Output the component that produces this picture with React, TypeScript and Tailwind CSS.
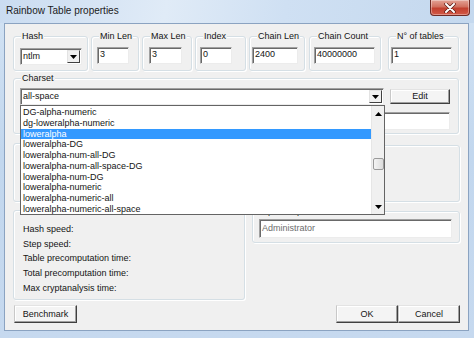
import React from "react";

const FONT = "font-['Liberation_Sans',Arial,sans-serif]";

const charsets = [
  "DG-alpha-numeric",
  "dg-loweralpha-numeric",
  "loweralpha",
  "loweralpha-DG",
  "loweralpha-num-all-DG",
  "loweralpha-num-all-space-DG",
  "loweralpha-num-DG",
  "loweralpha-numeric",
  "loweralpha-numeric-all",
  "loweralpha-numeric-all-space",
];

function Group({ label, className, children }: { label?: string; className?: string; children?: React.ReactNode }) {
  return (
    <div className={`relative shrink-0 rounded-[3px] border border-[#d5dfe5] shadow-[inset_1px_1px_0_#fff,1px_1px_0_#fff] ${className ?? ""}`}>
      {label && (
        <span className="absolute -top-[7px] left-[7px] bg-[#f0f0f0] px-[1px] leading-[12px] whitespace-nowrap">{label}</span>
      )}
      {children}
    </div>
  );
}

function Field({ value, className, muted }: { value?: string; className?: string; muted?: boolean }) {
  return (
    <div
      className={`bg-white border border-t-[#a0a0a0] border-l-[#a0a0a0] border-r-[#ececec] border-b-[#ececec] shadow-[inset_1px_1px_0_#696969] pl-[2px] pt-[1px] leading-[11px] whitespace-nowrap overflow-hidden ${muted ? "text-[#6d6d6d]" : ""} ${className ?? ""}`}
    >
      {value}
    </div>
  );
}

function Arrow({ up }: { up?: boolean }) {
  return (
    <svg width="7" height="4" viewBox="0 0 7 4" className={up ? "rotate-180" : ""}>
      <path d="M0 0h7L3.5 4z" fill="#000" />
    </svg>
  );
}

function Combo({ value, className }: { value: string; className?: string }) {
  return (
    <div
      className={`flex bg-white border border-t-[#a0a0a0] border-l-[#a0a0a0] border-r-[#ececec] border-b-[#ececec] shadow-[inset_1px_1px_0_#696969] ${className ?? ""}`}
    >
      <span className="flex-1 pl-[2px] pt-[2px] leading-[11px]">{value}</span>
      <div className="w-[13px] my-[1px] mr-[1px] flex items-center justify-center bg-[#f0f0f0] border border-t-[#e3e3e3] border-l-[#e3e3e3] border-r-[#404040] border-b-[#404040]">
        <Arrow />
      </div>
    </div>
  );
}

function Button({ label, className }: { label: string; className?: string }) {
  return (
    <div
      className={`shrink-0 flex items-center justify-center bg-[#f4f4f4] border border-t-[#e3e3e3] border-l-[#c8c8c8] border-r-[#404040] border-b-[#404040] shadow-[inset_-1px_-1px_0_#a0a0a0,inset_1px_1px_0_#fff] leading-[11px] ${className ?? ""}`}
    >
      {label}
    </div>
  );
}

export default function App() {
  return (
    <div
      className={`w-[474px] h-[338px] overflow-hidden ${FONT} text-[9px] text-[#141414] flex flex-col bg-[linear-gradient(180deg,#d3e3f4_0%,#c2d7ee_45%,#c6d9ef_100%)]`}
    >
      <div className="h-[23px] shrink-0 flex items-start bg-[linear-gradient(100deg,#cadcf1_0%,#e0ebf7_35%,#cfe0f3_60%,#c4d8ee_100%)]">
        <span className="ml-[6px] mt-[5px] text-[10px] leading-[12px] text-[#1b1b1b]">Rainbow Table properties</span>
        <div className="ml-auto mr-[4px] w-[40px] h-[16px] rounded-b-[4px] border border-t-0 border-[#6e2a24] bg-[linear-gradient(180deg,#e3a396_0%,#d1705f_45%,#c2402f_55%,#d35a48_100%)] flex items-center justify-center shadow-[inset_0_0_0_1px_rgba(255,255,255,0.35)]">
          <svg width="12" height="10" viewBox="0 0 12 10">
            <path d="M2 1l8 8M10 1L2 9" stroke="#5a1a14" strokeWidth="3.4" strokeLinecap="round" />
            <path d="M2 1l8 8M10 1L2 9" stroke="#fff" strokeWidth="2" strokeLinecap="round" />
          </svg>
        </div>
      </div>

      <div className="ml-[4px] w-[465px] h-[308px] shrink-0 border border-[#8ba3c1] bg-[#f0f0f0] relative">
        {/* top parameters */}
        <div className="flex mt-[12px] ml-[8px]">
          <Group label="Hash" className="w-[75px] h-[35px]">
            <Combo value="ntlm" className="ml-[6px] mt-[11px] w-[62px] h-[17px]" />
          </Group>
          <Group label="Min Len" className="ml-[3px] w-[48px] h-[35px]">
            <Field value="3" className="ml-[5px] mt-[10px] w-[32px] h-[17px]" />
          </Group>
          <Group label="Max Len" className="ml-[3px] w-[50px] h-[35px]">
            <Field value="3" className="ml-[6px] mt-[10px] w-[33px] h-[17px]" />
          </Group>
          <Group label="Index" className="ml-[3px] w-[51px] h-[35px]">
            <Field value="0" className="ml-[4px] mt-[10px] w-[32px] h-[17px]" />
          </Group>
          <Group label="Chain Len" className="ml-[3px] w-[56px] h-[35px]">
            <Field value="2400" className="ml-[2px] mt-[10px] w-[46px] h-[17px]" />
          </Group>
          <Group label="Chain Count" className="ml-[4px] w-[72px] h-[35px]">
            <Field value="40000000" className="ml-[4px] mt-[10px] w-[61px] h-[17px]" />
          </Group>
          <Group label="N° of tables" className="ml-[7px] w-[71px] h-[35px]">
            <Field value="1" className="ml-[2px] mt-[10px] w-[61px] h-[17px]" />
          </Group>
        </div>

        {/* charset */}
        <Group label="Charset" className="mt-[7px] ml-[8px] w-[446px] h-[56px]">
          <div className="flex items-start mt-[9px] ml-[6px]">
            <Combo value="all-space" className="w-[364px] h-[17px]" />
            <Button label="Edit" className="ml-[6px] mt-[1px] w-[60px] h-[15px]" />
          </div>
          <Field className="mt-[7px] ml-[6px] w-[430px] h-[18px]" />
        </Group>

        {/* table info (labels hidden under the open list) */}
        <div className="flex items-start mt-[9px] ml-[8px]">
          <Group className="w-[232px] h-[59px]" />
          <Group className="ml-[7px] mt-[2px] w-[208px] h-[57px]" />
        </div>

        {/* benchmark + optional */}
        <div className="flex items-start mt-[8px] ml-[8px]">
          <Group className="w-[232px] h-[90px]">
            <div className="pl-[9px] pt-[11px] leading-[14.7px]">
              <div>Hash speed:</div>
              <div>Step speed:</div>
              <div>Table precomputation time:</div>
              <div>Total precomputation time:</div>
              <div>Max cryptanalysis time:</div>
            </div>
          </Group>
          <Group label="Optional parameter" className="ml-[7px] mt-[1px] w-[208px] h-[32px]">
            <Field value="Administrator" muted className="ml-[6px] mt-[7px] w-[193px] h-[19px] pt-[3px]" />
          </Group>
        </div>

        {/* buttons */}
        <div className="flex mt-[5px] pl-[9px] pr-[8px]">
          <Button label="Benchmark" className="w-[63px] h-[18px]" />
          <Button label="OK" className="ml-auto w-[62px] h-[18px]" />
          <Button label="Cancel" className="w-[62px] h-[18px]" />
        </div>

        {/* open charset dropdown */}
        <div className="absolute left-[15px] top-[81px] w-[365px] h-[110px] bg-white border border-[#646464] flex">
          <div className="flex-1 pt-[1px]">
            {charsets.map((c) => (
              <div
                key={c}
                className={`h-[10.75px] leading-[10.75px] pl-[2px] whitespace-nowrap ${c === "loweralpha" ? "bg-[#3399ff] text-white" : ""}`}
              >
                {c}
              </div>
            ))}
          </div>
          <div className="w-[13px] bg-[#f0f0f0] border-l border-[#e6e6e6] flex flex-col items-center">
            <div className="h-[13px] flex items-center justify-center mt-[1px]">
              <Arrow up />
            </div>
            <div className="mt-[38px] w-[11px] h-[12px] rounded-[2px] border border-[#9a9a9a] bg-[linear-gradient(90deg,#f4f4f4,#dcdcdc)]" />
            <div className="mt-auto mb-[2px] h-[11px] flex items-center justify-center">
              <Arrow />
            </div>
          </div>
        </div>
      </div>
    </div>
  );
}
